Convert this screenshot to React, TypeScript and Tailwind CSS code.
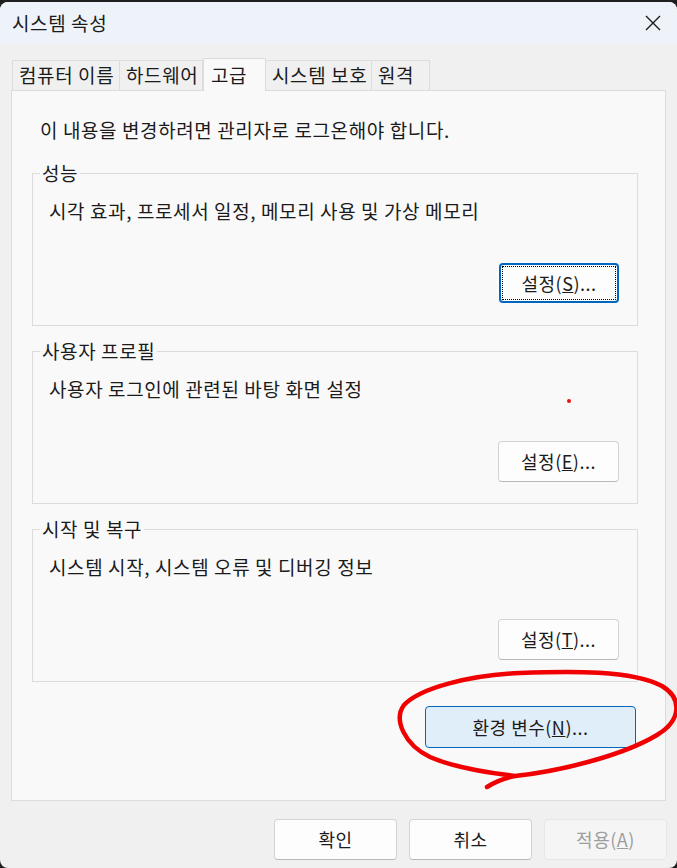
import React from "react";

const font = { fontFamily: '"Malgun Gothic","Noto Sans CJK KR","Noto Sans",sans-serif' };

function Btn({ children, className = "" }: { children: React.ReactNode; className?: string }) {
  return (
    <div
      className={
        "flex items-center justify-center rounded-[4px] border border-[#d3d3d3] border-b-[#b9b9b9] bg-[#fdfdfd] text-[18px] tracking-[0.5px] text-[#1b1b1b] " +
        className
      }
    >
      {children}
    </div>
  );
}

function Group({
  title,
  desc,
  btn,
  focused,
}: {
  title: string;
  desc: string;
  btn: React.ReactNode;
  focused?: boolean;
}) {
  return (
    <div className="relative ml-[20px] mr-[27px] h-[153px] border border-[#dcdcdc]">
      <div className="absolute left-[7px] top-[-14px] bg-[#f9f9f9] px-[2px] text-[19px] leading-[26px] tracking-[0.6px] text-[#1b1b1b]">
        {title}
      </div>
      <div className="pl-[16px] pt-[24px] text-[19px] leading-[26px] tracking-[0.6px] text-[#1b1b1b]">{desc}</div>
      <div className="absolute right-[18px] top-[89px]">
        {focused ? (
          <div className="flex h-[40px] w-[120px] items-center justify-center rounded-[4px] border-2 border-[#0067c0] bg-[#fdfdfd] p-[1px]">
            <div className="flex h-full w-full items-center justify-center border border-dotted border-black text-[18px] tracking-[0.5px] text-[#1b1b1b]">
              {btn}
            </div>
          </div>
        ) : (
          <Btn className="h-[41px] w-[121px]">{btn}</Btn>
        )}
      </div>
    </div>
  );
}

export default function App() {
  const tabs = [
    { t: "컴퓨터 이름", w: 107 },
    { t: "하드웨어", w: 83 },
    { t: "고급", w: 63, sel: true },
    { t: "시스템 보호", w: 106 },
    { t: "원격", w: 58 },
  ];
  return (
    <div className="relative h-[868px] w-[677px] overflow-hidden bg-[#1f1f1f]" style={font}>
      <div className="mt-[2px] flex h-[866px] flex-col overflow-hidden rounded-[8px] bg-[#f0f0f0]">
        {/* title bar */}
        <div className="flex h-[42px] items-center justify-between bg-[#eef2f9] pl-[12px] pr-[14px]">
          <span className="text-[19px] tracking-[0.6px] text-[#1b1b1b]">시스템 속성</span>
          <svg width="18" height="18" viewBox="0 0 18 18" className="mr-[1px]">
            <path d="M2 2 L16 16 M16 2 L2 16" stroke="#1b1b1b" strokeWidth="1.4" fill="none" />
          </svg>
        </div>
        {/* tabs */}
        <div className="flex h-[46px] items-end pl-[12px]">
          {tabs.map((tb) =>
            tb.sel ? (
              <div
                key={tb.t}
                className="relative z-10 -mb-[1px] flex h-[33px] items-center border border-b-0 border-[#dcdcdc] bg-[#f9f9f9] pl-[7px] text-[19px] tracking-[0.6px] text-[#1b1b1b]"
                style={{ width: tb.w }}
              >
                {tb.t}
              </div>
            ) : (
              <div
                key={tb.t}
                className="-ml-[1px] flex h-[30px] items-center border border-b-0 border-[#dcdcdc] bg-[#f0f0f0] pl-[6px] text-[19px] tracking-[0.6px] text-[#1b1b1b] first:ml-0"
                style={{ width: tb.w + 1 }}
              >
                {tb.t}
              </div>
            )
          )}
        </div>
        {/* panel */}
        <div className="mx-[11px] flex h-[711px] w-[655px] flex-col border border-[#dcdcdc] bg-[#f9f9f9]">
          <div className="pl-[28px] pt-[26px] text-[19px] leading-[26px] tracking-[0.6px] text-[#1b1b1b]">
            이 내용을 변경하려면 관리자로 로그온해야 합니다.
          </div>
          <div className="mt-[30px] flex flex-col gap-[25px]">
            <Group
              title="성능"
              desc="시각 효과, 프로세서 일정, 메모리 사용 및 가상 메모리"
              focused
              btn={
                <span>
                  설정(<span className="underline">S</span>)...
                </span>
              }
            />
            <Group
              title="사용자 프로필"
              desc="사용자 로그인에 관련된 바탕 화면 설정"
              btn={
                <span>
                  설정(<span className="underline">E</span>)...
                </span>
              }
            />
            <Group
              title="시작 및 복구"
              desc="시스템 시작, 시스템 오류 및 디버깅 정보"
              btn={
                <span>
                  설정(<span className="underline">T</span>)...
                </span>
              }
            />
          </div>
          <div className="mt-[24px] flex justify-end pr-[29px]">
            <div className="flex h-[42px] w-[211px] items-center justify-center rounded-[4px] border border-[#0067c0] bg-[#e0eef9] text-[18px] tracking-[0.5px] text-[#1b1b1b]">
              환경 변수(<span className="underline">N</span>)...
            </div>
          </div>
        </div>
        {/* bottom buttons */}
        <div className="mt-[18px] flex justify-end gap-[12px] pr-[10px]">
          <Btn className="h-[41px] w-[123px]">확인</Btn>
          <Btn className="h-[41px] w-[123px]">취소</Btn>
          <div className="flex h-[41px] w-[123px] items-center justify-center rounded-[4px] border border-[#e6e6e6] bg-[#f5f5f5] text-[18px] tracking-[0.5px] text-[#9d9d9d]">
            적용(<span className="underline">A</span>)
          </div>
        </div>
      </div>
      {/* red annotations */}
      <svg className="pointer-events-none absolute left-0 top-0" width="677" height="868">
        <circle cx="569" cy="401" r="2" fill="#ee1111" />
        <path
          d="M487 787 C495 782 505 778 515 776 C560 771 622 756 657 735 C682 720 682 698 662 686 C632 670 570 671 520 673 C470 675 420 688 404 705 C393 720 405 745 430 757 C455 768 490 773 515 776"
          stroke="#f00000"
          strokeWidth="4.5"
          fill="none"
          strokeLinecap="round"
          strokeLinejoin="round"
        />
      </svg>
    </div>
  );
}
